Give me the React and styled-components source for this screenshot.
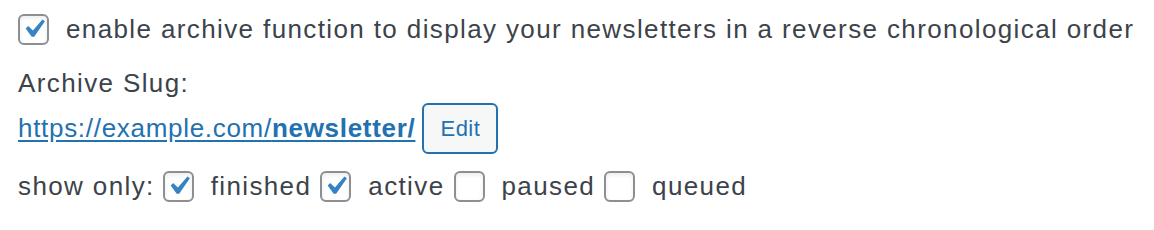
import React from "react";
import styled, { createGlobalStyle } from "styled-components";

const GlobalStyle = createGlobalStyle`
  html, body {
    margin: 0;
    padding: 0;
    background: #fff;
  }
  body {
    font-family: "Liberation Sans", Arial, sans-serif;
    color: #3c434a;
  }
`;

const Wrapper = styled.div`
  padding: 13px 18px;
  font-size: 26px;
  letter-spacing: 1.38px;
  display: flex;
  flex-direction: column;
`;

const Row = styled.div`
  display: flex;
  align-items: center;
  margin-top: ${(props) => props.top || 0}px;
  height: ${(props) => props.h || 32}px;
`;

const Box = styled.span`
  width: 31px;
  height: 31px;
  box-sizing: border-box;
  border: 2px solid #8c8f94;
  border-radius: 6px;
  background: #fff;
  box-shadow: inset 0 2px 4px rgba(0, 0, 0, 0.08);
  display: inline-flex;
  align-items: center;
  justify-content: center;
  flex-shrink: 0;
  margin-right: ${(props) => props.after || 17}px;
  margin-left: ${(props) => props.before || 0}px;
`;

const Label = styled.span`
  white-space: nowrap;
`;

const Link = styled.a`
  color: #2271b1;
  text-decoration: underline;
  text-underline-offset: 3px;
  white-space: nowrap;
  letter-spacing: 0.7px;
  b {
    font-weight: 700;
  }
`;

const EditButton = styled.button`
  margin-left: 7px;
  width: 76px;
  height: 51px;
  box-sizing: border-box;
  border: 2px solid #2271b1;
  border-radius: 6px;
  background: #f6f7f7;
  color: #2271b1;
  font-family: "Liberation Sans", Arial, sans-serif;
  font-size: 22px;
  letter-spacing: 0.5px;
  padding: 0;
`;

function Check({ checked, before, after }) {
  return (
    <Box before={before} after={after}>
      {checked && (
        <svg width="40" height="40" viewBox="0 0 20 20" style={{ margin: "-5px" }}>
          <path
            d="M14.83 4.89l1.34.94-5.81 8.38H9.02L5.78 9.67l1.34-1.25 2.57 2.4z"
            fill="#3582c4"
          />
        </svg>
      )}
    </Box>
  );
}

export default function App() {
  return (
    <>
      <GlobalStyle />
      <Wrapper>
        <Row h={32}>
          <Check checked />
          <Label>
            enable archive function to display your newsletters in a reverse
            chronological order
          </Label>
        </Row>
        <Row top={22} h={32}>
          <Label>Archive Slug:</Label>
        </Row>
        <Row top={4} h={51}>
          <Link href="#">
            https://example.com/<b>newsletter/</b>
          </Link>
          <EditButton>Edit</EditButton>
        </Row>
        <Row top={16} h={32}>
          <Label>show only:</Label>
          <Check checked before={8} />
          <Label>finished</Label>
          <Check checked before={9} />
          <Label>active</Label>
          <Check before={9} />
          <Label>paused</Label>
          <Check before={9} />
          <Label>queued</Label>
        </Row>
      </Wrapper>
    </>
  );
}
